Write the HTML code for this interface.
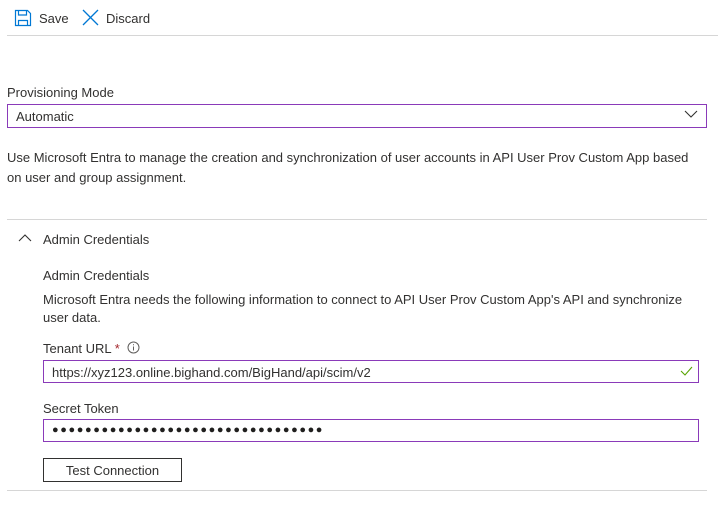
<!DOCTYPE html>
<html><head><meta charset="utf-8"><style>
*{box-sizing:border-box;margin:0;padding:0}
body{width:718px;height:517px;background:#fff;font-family:"Liberation Sans",sans-serif;font-size:13px;color:#323130;position:relative;overflow:hidden}
.a{position:absolute;white-space:nowrap}
.hr{position:absolute;height:1px;background:#d6d6d6}
.box{position:absolute;border:1px solid #8a3ab9;background:#fff}
</style></head><body>
<svg class="a" style="left:14px;top:9px" width="18" height="18" viewBox="0 0 18 18"><path d="M1.5 1.5h12l3 3v12h-15z" fill="none" stroke="#0078d4" stroke-width="1.2"/><path d="M4.5 1.5v4.5h8v-4.5" fill="none" stroke="#0078d4" stroke-width="1.2"/><path d="M4.5 16.5v-5h9v5" fill="none" stroke="#0078d4" stroke-width="1.2"/></svg>
<div class="a" style="left:39px;top:11px">Save</div>
<svg class="a" style="left:82px;top:9px" width="17" height="17" viewBox="0 0 17 17"><path d="M1 1L16 16M16 1L1 16" stroke="#0078d4" stroke-width="1.3"/></svg>
<div class="a" style="left:106px;top:11px">Discard</div>
<div class="hr" style="left:7px;top:35px;width:711px"></div>
<div class="a" style="left:7px;top:85px">Provisioning Mode</div>
<div class="box" style="left:7px;top:104px;width:700px;height:24px"></div>
<div class="a" style="left:16px;top:109px">Automatic</div>
<svg class="a" style="left:684px;top:110px" width="14" height="9" viewBox="0 0 14 9"><path d="M1 1l6 6 6-6" fill="none" stroke="#323130" stroke-width="1.1"/></svg>
<div class="a" style="left:7px;top:148px;line-height:20px;white-space:normal;width:690px">Use Microsoft Entra to manage the creation and synchronization of user accounts in API User Prov Custom App based on user and group assignment.</div>
<div class="hr" style="left:7px;top:219px;width:700px"></div>
<svg class="a" style="left:18px;top:233px" width="14" height="9" viewBox="0 0 14 9"><path d="M1 8l6-6 6 6" fill="none" stroke="#323130" stroke-width="1.1"/></svg>
<div class="a" style="left:43px;top:232px">Admin Credentials</div>
<div class="a" style="left:43px;top:268px">Admin Credentials</div>
<div class="a" style="left:43px;top:291px;line-height:18px;white-space:normal;width:660px">Microsoft Entra needs the following information to connect to API User Prov Custom App's API and synchronize user data.</div>
<div class="a" style="left:43px;top:341px">Tenant URL <span style="color:#a4262c">*</span></div>
<svg class="a" style="left:127px;top:341px" width="13" height="13" viewBox="0 0 13 13"><circle cx="6.5" cy="6.5" r="5.5" fill="none" stroke="#605e5c"/><path d="M6.5 5.5v4M6.5 3.3v1" stroke="#605e5c"/></svg>
<div class="box" style="left:43px;top:360px;width:656px;height:23px"></div>
<div class="a" style="left:52px;top:365px">https://xyz123.online.bighand.com/BigHand/api/scim/v2</div>
<svg class="a" style="left:680px;top:366px" width="13" height="10" viewBox="0 0 13 10"><path d="M1 5l4 4 7-8" fill="none" stroke="#57a300" stroke-width="1.1"/></svg>
<div class="a" style="left:43px;top:401px">Secret Token</div>
<div class="box" style="left:43px;top:419px;width:656px;height:23px"></div>
<div class="a" style="left:52px;top:424px;font-size:11px;letter-spacing:1.6px;color:#201f1e">●●●●●●●●●●●●●●●●●●●●●●●●●●●●●●●●●</div>
<div class="a" style="left:43px;top:458px;width:139px;height:24px;border:1px solid #323130;text-align:center;line-height:23px">Test Connection</div>
<div class="hr" style="left:7px;top:490px;width:700px"></div>
</body></html>
